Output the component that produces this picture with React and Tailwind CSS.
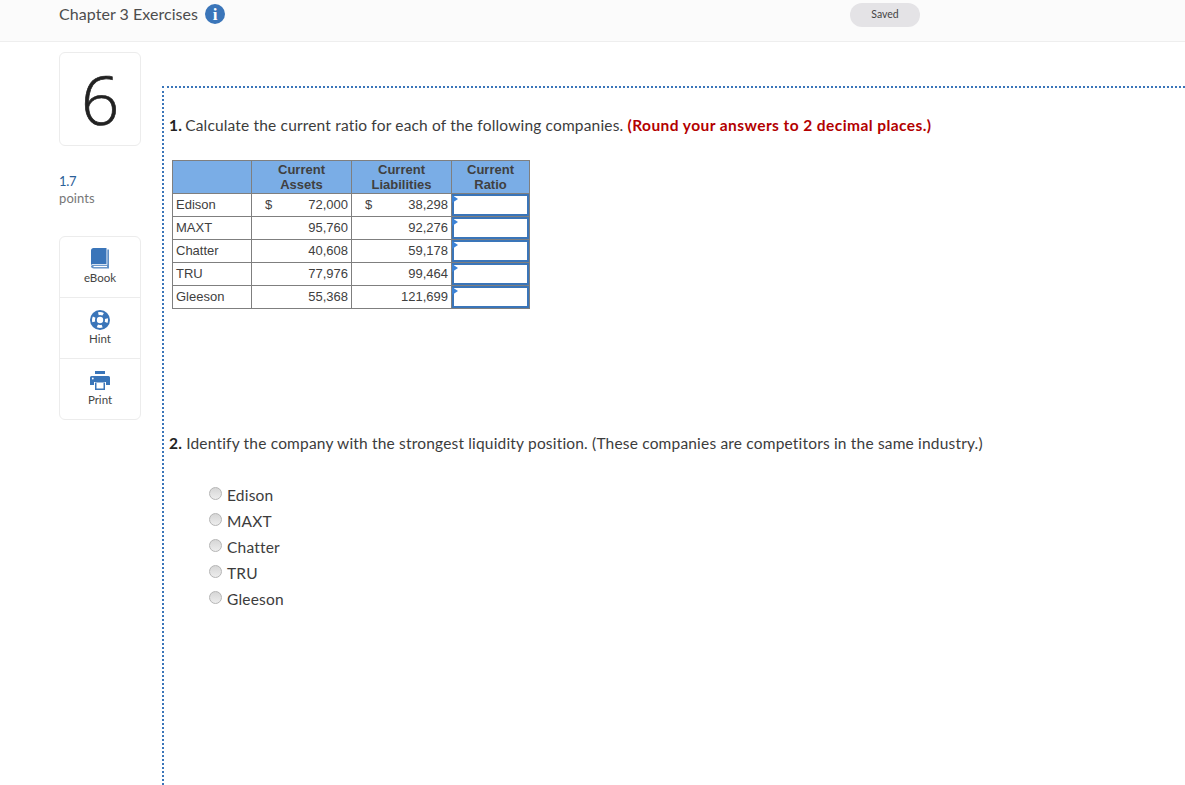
const rows = [
  { name: "Edison", assets: "72,000", liabilities: "38,298", dollar: true },
  { name: "MAXT", assets: "95,760", liabilities: "92,276" },
  { name: "Chatter", assets: "40,608", liabilities: "59,178" },
  { name: "TRU", assets: "77,976", liabilities: "99,464" },
  { name: "Gleeson", assets: "55,368", liabilities: "121,699" },
];

const options = ["Edison", "MAXT", "Chatter", "TRU", "Gleeson"];

const BookIcon = () => (
  <svg width="18" height="21" viewBox="0 0 18 21">
    <path d="M2.500 0H15.500V16H2.500C1.500 16 .6 16.400 0 17V2.500C0 1.100 1.100 0 2.500 0z" fill="#3a75b9" />
    <path d="M16.300 1.500H18V20.500H2.800C1.200 20.500 0 19.700 0 18.600 0 17.500 1.200 16.800 2.800 16.800H16.300z" fill="#3a75b9" opacity=".8" />
    <path d="M2.500 18.500h13.500" stroke="#fff" strokeWidth="1.200" />
  </svg>
);

const HintIcon = () => (
  <svg width="20" height="20" viewBox="0 0 20 20">
    <circle cx="10" cy="10" r="10" fill="#3a75b9" />
    <circle cx="10" cy="10" r="6.500" fill="none" stroke="#fff" strokeWidth="3" strokeDasharray="5 5.210" strokeDashoffset="2.500" />
    <circle cx="10" cy="10" r="3.200" fill="#fff" />
  </svg>
);

const PrintIcon = () => (
  <svg width="20" height="19" viewBox="0 0 20 19">
    <path d="M5 0h10v3H5z" fill="#3a75b9" />
    <path d="M1.500 5h17A1.500 1.500 0 0 1 20 6.500V14h-4v-3H4v3H0V6.500A1.500 1.500 0 0 1 1.500 5z" fill="#3a75b9" />
    <path d="M5 11.500h10V19H5z" fill="#3a75b9" />
    <path d="M6.500 12h7v5.500h-7z" fill="#fff" />
    <circle cx="2.800" cy="7.500" r=".9" fill="#fff" />
  </svg>
);

const Tool = ({ icon, label, last }) => (
  <div className={`flex flex-col items-center pt-[11px] ${last ? "h-[60px]" : "h-[61px] border-b border-[#ececec]"}`}>
    <div className="h-[21px] flex items-center justify-center">{icon}</div>
    <div className="text-[11.5px] leading-[14px] mt-[2px] text-[#444]">{label}</div>
  </div>
);

const cell = "border border-[#7f7f7f] p-0";

export default function App() {
  return (
    <div className="w-[1185px] h-[785px] overflow-hidden bg-white text-[#3c3c3c] font-['Lato',sans-serif]">
      <header className="h-[42px] bg-[#fbfbfb] border-b border-[#eeeeee] pl-[59px] flex items-start">
        <h1 className="text-[16px] leading-[20px] mt-[4px] text-[#4d4d4d] tracking-[0.05px]">Chapter 3 Exercises</h1>
        <div className="w-5 h-5 ml-[7px] mt-[4px] rounded-full bg-[#3a75b9] text-white flex items-center justify-center font-['Liberation_Serif',serif] font-bold text-[17px] leading-none">i</div>
        <div className="ml-auto mr-[265px] mt-[3px] w-[70px] h-6 rounded-full bg-[#e4e3e6] text-[10.5px] text-[#444] flex items-center justify-center">Saved</div>
      </header>

      <div className="flex items-start">
        <aside className="w-[82px] ml-[59px] pt-[10px] shrink-0">
          <div className="h-[94px] border border-[#ececec] rounded-md flex items-center justify-center font-['Open_Sans',sans-serif] font-light text-[67px] leading-none text-[#222] [-webkit-text-stroke:0.7px_#222]">6</div>
          <div className="mt-[28px] text-[13px] leading-[15px] text-[#2a6099] tracking-[-0.3px]">1.7</div>
          <div className="mt-[2px] text-[13px] leading-[15px] text-[#777] tracking-[0.1px]">points</div>
          <div className="mt-[30px] border border-[#ececec] rounded-md">
            <Tool icon={<BookIcon />} label="eBook" />
            <Tool icon={<HintIcon />} label="Hint" />
            <Tool icon={<PrintIcon />} label="Print" last />
          </div>
        </aside>

        <main className="ml-[21px] mt-[44px] flex-1 h-[699px] border-l-2 border-t-2 border-dotted border-[#3a75b9] pl-[5px]">
          <p className="mt-[27px] text-[15.500px] leading-[20px] tracking-[0.17px]">
            <b className="text-[#222] mr-[-1px]">1.</b> Calculate the current ratio for each of the following companies.{" "}
            <b className="text-[#b30000] tracking-[0.43px]">(Round your answers to 2 decimal places.)</b>
          </p>

          <table className="mt-[25px] ml-[3px] border-collapse table-fixed w-[357px] font-['Liberation_Sans',sans-serif] text-[13px] leading-[14px] text-[#404040]">
            <colgroup>
              <col className="w-[79px]" />
              <col className="w-[100px]" />
              <col className="w-[100px]" />
              <col className="w-[78px]" />
            </colgroup>
            <thead>
              <tr className="h-[33px] bg-[#7aade6] text-center leading-[15px]">
                <th className={cell}></th>
                <th className={`${cell} font-semibold`}>Current<br />Assets</th>
                <th className={`${cell} font-semibold`}>Current<br />Liabilities</th>
                <th className={`${cell} font-semibold`}>Current<br />Ratio</th>
              </tr>
            </thead>
            <tbody>
              {rows.map((r) => (
                <tr key={r.name} className="h-[23px]">
                  <td className={`${cell} pl-[3px]`}>{r.name}</td>
                  <td className={cell}>
                    <div className="flex justify-between pl-[13px] pr-[3px]">
                      <span>{r.dollar ? "$" : ""}</span>
                      <span>{r.assets}</span>
                    </div>
                  </td>
                  <td className={cell}>
                    <div className="flex justify-between pl-[13px] pr-[3px]">
                      <span>{r.dollar ? "$" : ""}</span>
                      <span>{r.liabilities}</span>
                    </div>
                  </td>
                  <td className={cell}>
                    <div className="relative h-[22px] border-2 border-[#3a75b9] bg-white">
                      <svg className="absolute -left-[2px] -top-[1px]" width="6" height="8" viewBox="0 0 6 8">
                        <path d="M0 0L6 4L0 8z" fill="#3b82d6" />
                      </svg>
                    </div>
                  </td>
                </tr>
              ))}
            </tbody>
          </table>

          <p className="mt-[124px] text-[15.500px] leading-[20px] tracking-[0.18px]">
            <b className="text-[#222]">2.</b> Identify the company with the strongest liquidity position. (These companies are competitors in the same industry.)
          </p>

          <div className="mt-[32px] ml-[40px] flex flex-col gap-[6px]">
            {options.map((o) => (
              <label key={o} className="h-5 flex items-center text-[15.500px] leading-[20px]">
                <span className="w-[13px] h-[13px] -mt-[3px] rounded-full border border-[#b5b5b5] bg-gradient-to-b from-[#d6d6d6] to-[#ededed] shrink-0" />
                <span className="ml-[5px] tracking-[0.2px]">{o}</span>
              </label>
            ))}
          </div>
        </main>
      </div>
    </div>
  );
}
